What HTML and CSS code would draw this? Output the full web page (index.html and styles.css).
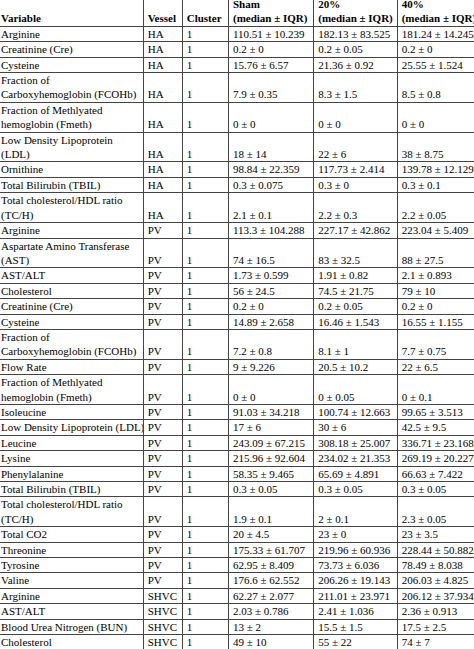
FILE: index.html
```html
<!DOCTYPE html>
<html>
<head>
<meta charset="utf-8">
<link rel="stylesheet" href="styles.css">
</head>
<body>
<table class="data">
<colgroup>
<col class="c-var"><col class="c-ves"><col class="c-clu"><col class="c-val"><col class="c-val2"><col class="c-val3">
</colgroup>
<thead>
<tr><th>Variable</th><th>Vessel</th><th>Cluster</th><th>Sham<br>(median ± IQR)</th><th>20%<br>(median ± IQR)</th><th>40%<br>(median ± IQR)</th></tr>
</thead>
<tbody>
<tr><td>Arginine</td><td>HA</td><td>1</td><td>110.51 ± 10.239</td><td>182.13 ± 83.525</td><td>181.24 ± 14.245</td></tr>
<tr><td>Creatinine (Cre)</td><td>HA</td><td>1</td><td>0.2 ± 0</td><td>0.2 ± 0.05</td><td>0.2 ± 0</td></tr>
<tr><td>Cysteine</td><td>HA</td><td>1</td><td>15.76 ± 6.57</td><td>21.36 ± 0.92</td><td>25.55 ± 1.524</td></tr>
<tr><td>Fraction of<br>Carboxyhemoglobin (FCOHb)</td><td>HA</td><td>1</td><td>7.9 ± 0.35</td><td>8.3 ± 1.5</td><td>8.5 ± 0.8</td></tr>
<tr><td>Fraction of Methlyated<br>hemoglobin (Fmeth)</td><td>HA</td><td>1</td><td>0 ± 0</td><td>0 ± 0</td><td>0 ± 0</td></tr>
<tr><td>Low Density Lipoprotein<br>(LDL)</td><td>HA</td><td>1</td><td>18 ± 14</td><td>22 ± 6</td><td>38 ± 8.75</td></tr>
<tr><td>Ornithine</td><td>HA</td><td>1</td><td>98.84 ± 22.359</td><td>117.73 ± 2.414</td><td>139.78 ± 12.129</td></tr>
<tr><td>Total Bilirubin (TBIL)</td><td>HA</td><td>1</td><td>0.3 ± 0.075</td><td>0.3 ± 0</td><td>0.3 ± 0.1</td></tr>
<tr><td>Total cholesterol/HDL ratio<br>(TC/H)</td><td>HA</td><td>1</td><td>2.1 ± 0.1</td><td>2.2 ± 0.3</td><td>2.2 ± 0.05</td></tr>
<tr><td>Arginine</td><td>PV</td><td>1</td><td>113.3 ± 104.288</td><td>227.17 ± 42.862</td><td>223.04 ± 5.409</td></tr>
<tr><td>Aspartate Amino Transferase<br>(AST)</td><td>PV</td><td>1</td><td>74 ± 16.5</td><td>83 ± 32.5</td><td>88 ± 27.5</td></tr>
<tr><td>AST/ALT</td><td>PV</td><td>1</td><td>1.73 ± 0.599</td><td>1.91 ± 0.82</td><td>2.1 ± 0.893</td></tr>
<tr><td>Cholesterol</td><td>PV</td><td>1</td><td>56 ± 24.5</td><td>74.5 ± 21.75</td><td>79 ± 10</td></tr>
<tr><td>Creatinine (Cre)</td><td>PV</td><td>1</td><td>0.2 ± 0</td><td>0.2 ± 0.05</td><td>0.2 ± 0</td></tr>
<tr><td>Cysteine</td><td>PV</td><td>1</td><td>14.89 ± 2.658</td><td>16.46 ± 1.543</td><td>16.55 ± 1.155</td></tr>
<tr><td>Fraction of<br>Carboxyhemoglobin (FCOHb)</td><td>PV</td><td>1</td><td>7.2 ± 0.8</td><td>8.1 ± 1</td><td>7.7 ± 0.75</td></tr>
<tr><td>Flow Rate</td><td>PV</td><td>1</td><td>9 ± 9.226</td><td>20.5 ± 10.2</td><td>22 ± 6.5</td></tr>
<tr><td>Fraction of Methlyated<br>hemoglobin (Fmeth)</td><td>PV</td><td>1</td><td>0 ± 0</td><td>0 ± 0.05</td><td>0 ± 0.1</td></tr>
<tr><td>Isoleucine</td><td>PV</td><td>1</td><td>91.03 ± 34.218</td><td>100.74 ± 12.663</td><td>99.65 ± 3.513</td></tr>
<tr><td>Low Density Lipoprotein (LDL)</td><td>PV</td><td>1</td><td>17 ± 6</td><td>30 ± 6</td><td>42.5 ± 9.5</td></tr>
<tr><td>Leucine</td><td>PV</td><td>1</td><td>243.09 ± 67.215</td><td>308.18 ± 25.007</td><td>336.71 ± 23.168</td></tr>
<tr><td>Lysine</td><td>PV</td><td>1</td><td>215.96 ± 92.604</td><td>234.02 ± 21.353</td><td>269.19 ± 20.227</td></tr>
<tr><td>Phenylalanine</td><td>PV</td><td>1</td><td>58.35 ± 9.465</td><td>65.69 ± 4.891</td><td>66.63 ± 7.422</td></tr>
<tr><td>Total Bilirubin (TBIL)</td><td>PV</td><td>1</td><td>0.3 ± 0.05</td><td>0.3 ± 0.05</td><td>0.3 ± 0.05</td></tr>
<tr><td>Total cholesterol/HDL ratio<br>(TC/H)</td><td>PV</td><td>1</td><td>1.9 ± 0.1</td><td>2 ± 0.1</td><td>2.3 ± 0.05</td></tr>
<tr><td>Total CO2</td><td>PV</td><td>1</td><td>20 ± 4.5</td><td>23 ± 0</td><td>23 ± 3.5</td></tr>
<tr><td>Threonine</td><td>PV</td><td>1</td><td>175.33 ± 61.707</td><td>219.96 ± 60.936</td><td>228.44 ± 50.882</td></tr>
<tr><td>Tyrosine</td><td>PV</td><td>1</td><td>62.95 ± 8.409</td><td>73.73 ± 6.036</td><td>78.49 ± 8.038</td></tr>
<tr><td>Valine</td><td>PV</td><td>1</td><td>176.6 ± 62.552</td><td>206.26 ± 19.143</td><td>206.03 ± 4.825</td></tr>
<tr><td>Arginine</td><td>SHVC</td><td>1</td><td>62.27 ± 2.077</td><td>211.01 ± 23.971</td><td>206.12 ± 37.934</td></tr>
<tr><td>AST/ALT</td><td>SHVC</td><td>1</td><td>2.03 ± 0.786</td><td>2.41 ± 1.036</td><td>2.36 ± 0.913</td></tr>
<tr><td>Blood Urea Nitrogen (BUN)</td><td>SHVC</td><td>1</td><td>13 ± 2</td><td>15.5 ± 1.5</td><td>17.5 ± 2.5</td></tr>
<tr><td>Cholesterol</td><td>SHVC</td><td>1</td><td>49 ± 10</td><td>55 ± 22</td><td>74 ± 7</td></tr>
</tbody>
</table>
</body>
</html>
```
FILE: styles.css
```css
html, body {
  margin: 0;
  padding: 0;
  background: #ffffff;
  overflow: hidden;
}
.data {
  border-collapse: collapse;
  table-layout: fixed;
  width: 484px;
  margin: -4px 0 0 -4px;
  font-family: "Liberation Serif", "Times New Roman", serif;
  font-size: 11px;
  line-height: 14.4px;
  color: #000000;
}
.c-var { width: 146.7px; }
.c-ves { width: 39px; }
.c-clu { width: 46.3px; }
.c-val { width: 85.3px; }
.c-val2 { width: 83.4px; }
.c-val3 { width: 83.3px; }
.data th,
.data td {
  border: 1px solid #444444;
  padding: 0 0 0 4px;
  text-align: left;
  vertical-align: bottom;
  white-space: nowrap;
  overflow: hidden;
}
.data th {
  font-weight: bold;
}
```
